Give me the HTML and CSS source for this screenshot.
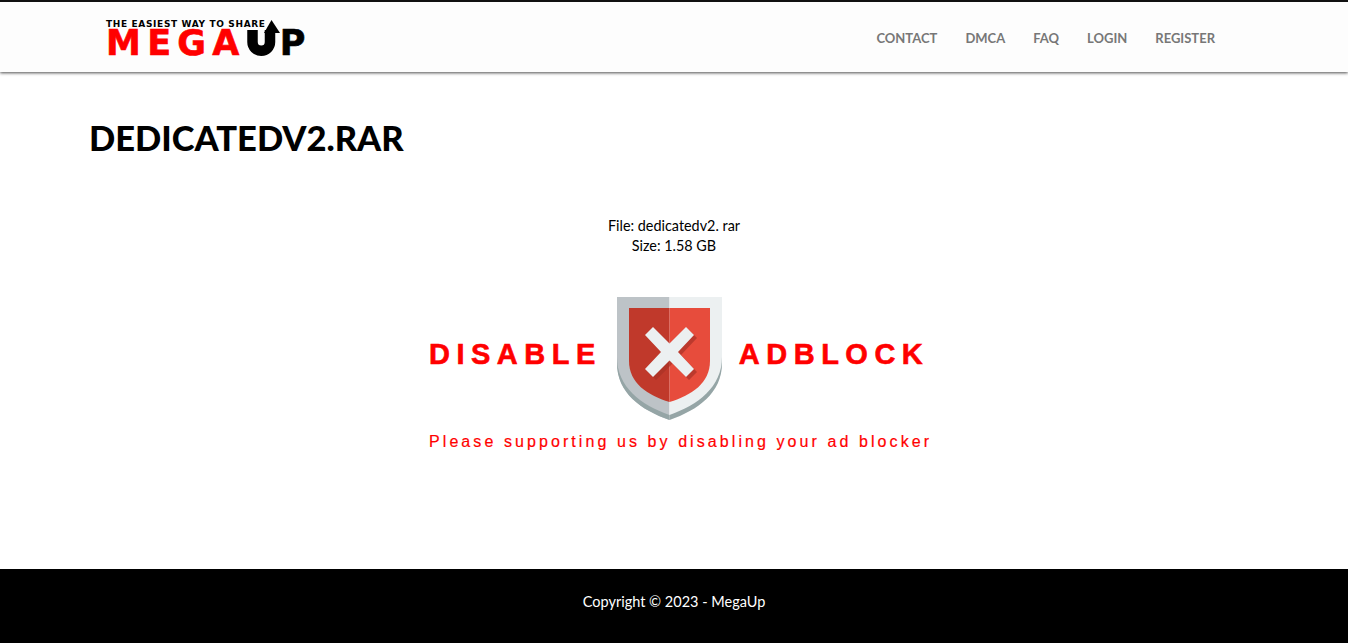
FILE: index.html
```html
<!DOCTYPE html>
<html>
<head>
  <title>MegaUp</title>
  <link rel="stylesheet" href="styles.css">
</head>
<body>
  <nav class="navbar">
    <a class="logo" href="#">
      <span class="logo-tag">THE EASIEST WAY TO SHARE</span>
      <span class="logo-name">
        <span class="logo-mega">MEGA</span>
        <svg class="logo-arrow" width="33" height="36" viewBox="0 0 33 36">
          <path d="M5.500 10V22A8.750 8.750 0 0 0 23 22V10" fill="none" stroke="#000" stroke-width="10.500"/>
          <path d="M24.500 0L33 13H17Z" fill="#000"/>
        </svg>
        <span class="logo-p">P</span>
      </span>
    </a>
    <ul class="nav-links">
      <li><a href="#">CONTACT</a></li>
      <li><a href="#">DMCA</a></li>
      <li><a href="#">FAQ</a></li>
      <li><a href="#">LOGIN</a></li>
      <li><a href="#">REGISTER</a></li>
    </ul>
  </nav>

  <div class="content">
    <h1 class="file-title">DEDICATEDV2.RAR</h1>
    <div class="file-info">
      <div>File: dedicatedv2. rar</div>
      <div>Size: 1.58 GB</div>
    </div>
    <div class="banner">
      <div class="banner-row">
        <span class="banner-word">DISABLE</span>
        <svg class="shield" width="105" height="123" viewBox="0 0 105 123">
          <path d="M0 0H52.500V123C24 113 0 96 0 66Z" fill="#bdc3c7"/>
          <path d="M105 0H52.500V123C81 113 105 96 105 66Z" fill="#ecf0f1"/>
          <path d="M0 60V66C0 96 24 113 52.500 123V118C24 108 0 90 0 60Z" fill="#95a5a6"/>
          <path d="M105 60V66C105 96 81 113 52.500 123V118C81 108 105 90 105 60Z" fill="#95a5a6"/>
          <path d="M12 11H52.500V105C30 98 12 86 12 64Z" fill="#c0392b"/>
          <path d="M93 11H52.500V105C75 98 93 86 93 64Z" fill="#e74c3c"/>
          <path d="M36 30L52.500 46.500L69 30L77 38L61 55L77 72L69 80L52.500 63.500L36 80L28 72L44 55L28 38Z" fill="#a93226" opacity=".7" transform="translate(3 3)"/>
          <path d="M36 30L52.500 46.500L69 30L77 38L61 55L77 72L69 80L52.500 63.500L36 80L28 72L44 55L28 38Z" fill="#ecf0f1"/>
        </svg>
        <span class="banner-word">ADBLOCK</span>
      </div>
      <div class="banner-note">Please supporting us by disabling your ad blocker</div>
    </div>
  </div>

  <footer class="footer">Copyright © 2023 - MegaUp</footer>
</body>
</html>
```

FILE: styles.css
```css
body {
  margin: 0;
  padding: 0;
  background-color: white;
  color: black;
  font-family: Lato, sans-serif;
}

.navbar {
  height: 70px;
  border-top: 2px solid #111;
  box-shadow: 0 1px 3px rgba(0, 0, 0, 0.7);
  background-color: #fdfdfd;
  display: flex;
  justify-content: space-between;
  align-items: center;
  padding: 0 133px 0 106px;
}

.logo {
  display: flex;
  flex-direction: column;
  text-decoration: none;
  color: black;
}

.logo-tag {
  font-family: "DejaVu Sans", sans-serif;
  font-size: 9px;
  font-weight: bold;
  letter-spacing: 0.650px;
  line-height: 10px;
  margin-bottom: 1px;
  white-space: nowrap;
}

.logo-name {
  display: flex;
  align-items: flex-end;
  height: 26px;
  font-family: "DejaVu Sans", sans-serif;
  font-size: 35px;
  font-weight: bold;
  line-height: 26px;
  -webkit-text-stroke: 0.6px currentColor;
}

.logo-mega {
  color: #ff0000;
  letter-spacing: 6.300px;
}

.logo-arrow {
  flex-shrink: 0;
  margin-left: 1px;
}

.nav-links {
  list-style-type: none;
  display: flex;
  gap: 28px;
  margin: 0;
  padding: 2px 0 0;
  font-size: 13px;
  font-weight: bold;
}

.nav-links a {
  color: #777;
  text-decoration: none;
}

.content {
  height: 497px;
  box-sizing: border-box;
  padding-top: 46px;
}

.file-title {
  margin: 0 0 58px 89px;
  font-size: 34.500px;
  line-height: 40px;
  font-weight: 900;
}

.file-info {
  text-align: center;
  font-size: 14.400px;
  line-height: 20px;
}

.banner {
  width: 505px;
  margin: 41px 0 0 429px;
  font-family: "Liberation Sans", sans-serif;
  color: #ff0000;
  font-weight: bold;
}

.banner-row {
  display: flex;
  align-items: center;
  gap: 15px;
}

.shield {
  margin-right: 2px;
}

.banner-word {
  font-size: 29px;
  letter-spacing: 6.500px;
  padding-bottom: 8px;
  -webkit-text-stroke: 0.6px #ff0000;
}

.banner-note {
  margin-top: 13px;
  font-size: 16px;
  font-weight: normal;
  letter-spacing: 3.080px;
  white-space: nowrap;
  -webkit-text-stroke: 0.2px #ff0000;
}

.footer {
  height: 74px;
  background-color: black;
  color: white;
  text-align: center;
  font-size: 14.500px;
  line-height: 66px;
}
```
